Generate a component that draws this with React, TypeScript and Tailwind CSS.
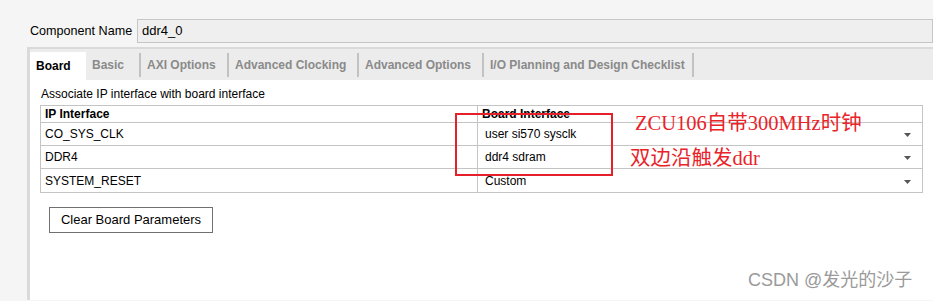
const tabs = [
    { label: 'Basic', w: 'w-[53px]' },
    { label: 'AXI Options', w: 'w-[86px]' },
    { label: 'Advanced Clocking', w: 'w-[128px]' },
    { label: 'Advanced Options', w: 'w-[123px]' },
    { label: 'I/O Planning and Design Checklist', w: 'w-[208px]' },
];

const rows = [
    { ip: 'CO_SYS_CLK', board: 'user si570 sysclk' },
    { ip: 'DDR4', board: 'ddr4 sdram' },
    { ip: 'SYSTEM_RESET', board: 'Custom' },
];

const Arrow = () => (
    <svg width="7" height="4" viewBox="0 0 7 4" className="mr-[11px] mt-[2px]">
        <path d="M0 0 H7 L3.5 4 Z" fill="#555555" />
    </svg>
);

export default function App() {
    return (
        <div className="relative w-[933px] h-[301px] overflow-hidden bg-[#f5f5f5] text-black font-['Liberation_Sans',Arial,sans-serif]">
            {/* component name */}
            <div className="flex items-center pt-[19px] pl-[30px]">
                <span className="text-[12.6px] w-[107px]">Component Name</span>
                <div className="flex-1 h-[24px] flex items-center border border-[#c6c6c6] bg-[#efefef] pl-[4px] text-[13px]">
                    ddr4_0
                </div>
            </div>

            {/* panel */}
            <div className="mt-[4px] ml-[27px] h-[253px] border-t-2 border-l-[3px] border-[#dadada] bg-white flex flex-col">
                <div className="flex items-start h-[31px] bg-[#ececec] pt-[3px] text-[12px] font-bold">
                    <div className="w-[56px] h-[28px] bg-white flex items-center pl-[6px]">Board</div>
                    {tabs.map((t) => (
                        <div key={t.label} className="flex items-start">
                            <div className={`${t.w} h-[26px] flex items-center pl-[6px] text-[#8a8a8a]`}>{t.label}</div>
                            <div className="w-[2px] h-[24px] mt-[1px] bg-[#c2c2c2]" />
                        </div>
                    ))}
                </div>

                <div className="pl-[10px] pr-[10px] text-[12px]">
                    <div className="h-[25px] flex items-center pl-[1px] pt-[2px]">Associate IP interface with board interface</div>
                    <div className="border border-[#c4c4c4]">
                        <div className="flex h-[17px] font-bold border-b border-[#c4c4c4]">
                            <div className="w-[437px] pl-[4px] flex items-center border-r border-[#c4c4c4]">IP Interface</div>
                            <div className="flex-1 pl-[4px] flex items-center">Board Interface</div>
                        </div>
                        {rows.map((r, i) => (
                            <div key={r.ip} className={`flex h-[23px] ${i < rows.length - 1 ? 'border-b border-[#c4c4c4]' : ''}`}>
                                <div className="w-[437px] pl-[4px] flex items-center border-r border-[#c4c4c4]">{r.ip}</div>
                                <div className="flex-1 pl-[7px] flex items-center justify-between">
                                    <span>{r.board}</span>
                                    <Arrow />
                                </div>
                            </div>
                        ))}
                    </div>
                    <button className="mt-[14px] ml-[9px] w-[164px] h-[26px] border border-[#707070] bg-white text-[13px]">
                        Clear Board Parameters
                    </button>
                </div>
            </div>

            {/* annotations */}
            <div className="absolute left-[455px] top-[113px] w-[158px] h-[63px] border-2 border-[#e5202b]" />
            <div className="absolute left-[635px] top-[110px] text-[20.5px] leading-[26px] text-[#e8232a] font-['Liberation_Serif','Noto_Sans_CJK_SC',serif]">
                ZCU106自带300MHz时钟
            </div>
            <div className="absolute left-[630px] top-[145px] text-[20.5px] leading-[26px] text-[#e8232a] font-['Liberation_Serif','Noto_Sans_CJK_SC',serif]">
                双边沿触发ddr
            </div>

            <div className="absolute left-[748px] top-[268px] text-[18px] leading-[24px] text-[#9a9a9a] [text-shadow:1px_1px_1px_#ffffff] font-['Liberation_Sans','Noto_Sans_CJK_SC',sans-serif]">
                CSDN @发光的沙子
            </div>
        </div>
    );
}
